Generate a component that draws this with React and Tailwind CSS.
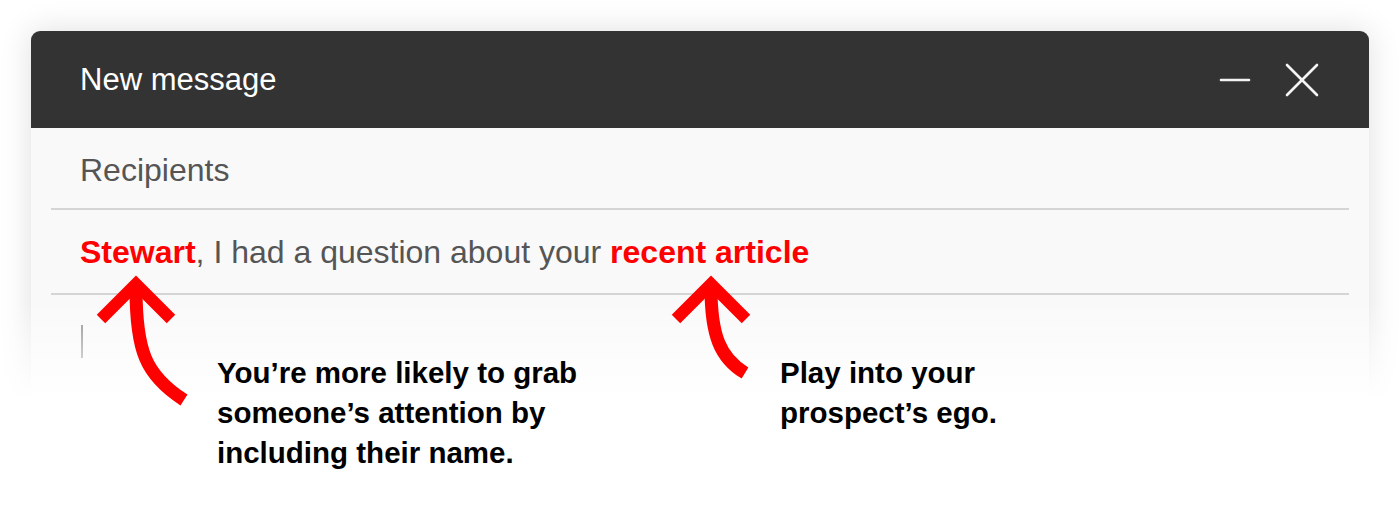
import React from "react";

const font = { fontFamily: '"Liberation Sans", Arial, sans-serif' };

function Arrow({ long }) {
  return (
    <svg width="110" height="140" viewBox="0 0 110 140" className="overflow-visible">
      <path d="M1 45 L36 10 L71 45" fill="none" stroke="#ff0000" strokeWidth="12" strokeLinejoin="miter" />
      {long ? (
        <path d="M36 14 C36 76 45 101 84 126" fill="none" stroke="#ff0000" strokeWidth="13" />
      ) : (
        <path d="M36 14 C36 61 45 84 70 99" fill="none" stroke="#ff0000" strokeWidth="13" />
      )}
    </svg>
  );
}

export default function App() {
  return (
    <div className="relative w-[1400px] h-[515px] bg-white overflow-hidden pt-[31px] px-[31px]" style={font}>
      <div className="rounded-t-[9px] bg-[#f9f9f9] shadow-[0_0_32px_rgba(0,0,0,0.13)] h-[400px]">
        <div className="h-[97px] bg-[#333333] rounded-t-[9px] flex items-center justify-between pl-[49px] pr-[50px]">
          <span className="text-white text-[31px] leading-none">New message</span>
          <div className="flex items-center gap-[34px]">
            <svg width="32" height="6" viewBox="0 0 32 6">
              <line x1="2" y1="3" x2="30" y2="3" stroke="#f4f4f4" strokeWidth="2.6" strokeLinecap="round" />
            </svg>
            <svg width="34" height="34" viewBox="0 0 34 34">
              <line x1="2" y1="2" x2="32" y2="32" stroke="#f4f4f4" strokeWidth="2.6" strokeLinecap="round" />
              <line x1="32" y1="2" x2="2" y2="32" stroke="#f4f4f4" strokeWidth="2.6" strokeLinecap="round" />
            </svg>
          </div>
        </div>
        <div className="mx-5 border-b-2 border-[#d5d5d5] h-[82px] flex items-center pl-[29px] pt-[4px]">
          <span className="text-[32px] text-[#555555] leading-none">Recipients</span>
        </div>
        <div className="mx-5 border-b-2 border-[#d5d5d5] h-[85px] flex items-center pl-[29px] pt-[1px]">
          <span className="text-[32px] text-[#555555] leading-none">
            <span className="font-bold text-[#ff0000]">Stewart</span>, I had a question about your{" "}
            <span className="font-bold text-[#ff0000]">recent article</span>
          </span>
        </div>
        <div className="pl-[50px] pt-[30px]">
          <div className="w-[2px] h-[33px] bg-[#8a8a8a]" />
        </div>
      </div>
      <div className="absolute left-0 right-0 top-[300px] h-[100px] bg-gradient-to-b from-white/0 to-white" />
      <div className="absolute left-0 right-0 top-[400px] bottom-0 bg-white" />

      <div className="absolute left-[100px] top-[274px] flex items-start">
        <Arrow long />
        <div className="ml-[7px] mt-[79px] text-[29.5px] leading-[40px] font-bold text-black">
          <div>You’re more likely to grab</div>
          <div>someone’s attention by</div>
          <div>including their name.</div>
        </div>
      </div>
      <div className="absolute left-[675px] top-[274px] flex items-start">
        <Arrow />
        <div className="ml-[-5px] mt-[79px] text-[29.5px] leading-[40px] font-bold text-black">
          <div>Play into your</div>
          <div>prospect’s ego.</div>
        </div>
      </div>
    </div>
  );
}
